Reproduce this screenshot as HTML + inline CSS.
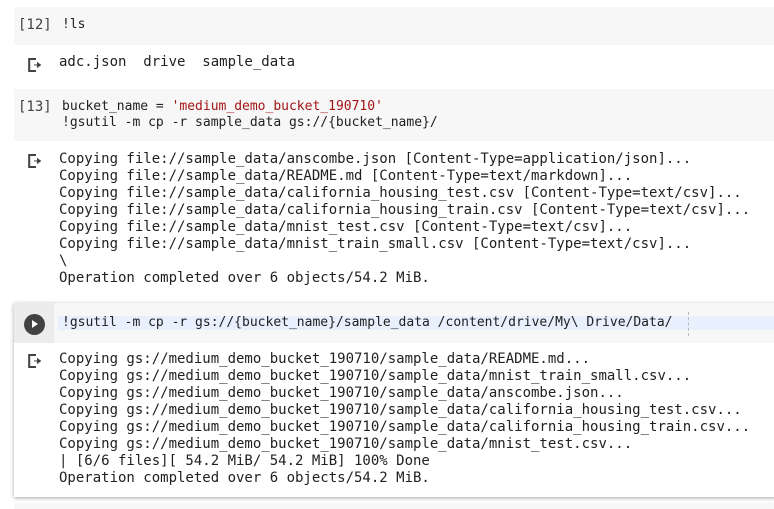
<!DOCTYPE html>
<html><head><style>
*{margin:0;padding:0;box-sizing:border-box}
body{width:774px;height:509px;background:#fff;overflow:hidden;position:relative;font-family:"DejaVu Sans Mono","Liberation Mono",monospace;color:#212121}
.abs{position:absolute}
.gray{background:#f7f7f7}
.code{font-size:13px;line-height:16px;white-space:pre;color:#212121}
.out{font-size:14px;line-height:17px;white-space:pre;color:#212121}
.cnt{font-size:14px;color:#424242;white-space:pre}
.str{color:#a31515}
.ico{position:absolute;width:16px;height:16px}
</style></head><body>
<div class="abs gray" style="left:14px;top:7px;width:760px;height:38px"></div>
<div class="abs cnt" style="left:18px;top:17px">[12]</div>
<div class="abs code" style="left:62px;top:17px">!ls</div>
<svg class="ico" style="left:27px;top:57px" viewBox="0 0 16 16"><path d="M9 2H2.2V14H9" fill="none" stroke="#424242" stroke-width="2"/><path d="M7 8H12M10.5 5.8L13.5 8L10.5 10.2Z" fill="#424242" stroke="#424242" stroke-width="1"/></svg>
<div class="abs out" style="left:59px;top:54px">adc.json  drive  sample_data</div>

<div class="abs gray" style="left:14px;top:89px;width:760px;height:52px"></div>
<div class="abs cnt" style="left:18px;top:99px">[13]</div>
<div class="abs code" style="left:62px;top:99px">bucket_name = <span class="str">'medium_demo_bucket_190710'</span>
!gsutil -m cp -r sample_data gs://{bucket_name}/</div>
<svg class="ico" style="left:27px;top:153px" viewBox="0 0 16 16"><path d="M9 2H2.2V14H9" fill="none" stroke="#424242" stroke-width="2"/><path d="M7 8H12M10.5 5.8L13.5 8L10.5 10.2Z" fill="#424242" stroke="#424242" stroke-width="1"/></svg>
<div class="abs out" style="left:59px;top:151px">Copying file://sample_data/anscombe.json [Content-Type=application/json]...
Copying file://sample_data/README.md [Content-Type=text/markdown]...
Copying file://sample_data/california_housing_test.csv [Content-Type=text/csv]...
Copying file://sample_data/california_housing_train.csv [Content-Type=text/csv]...
Copying file://sample_data/mnist_test.csv [Content-Type=text/csv]...
Copying file://sample_data/mnist_train_small.csv [Content-Type=text/csv]...
\
Operation completed over 6 objects/54.2 MiB.</div>

<div class="abs" style="left:14px;top:303px;width:762px;height:194px;background:#fff;box-shadow:0 1px 4px rgba(0,0,0,.35)"></div>
<div class="abs gray" style="left:14px;top:303px;width:760px;height:40px"></div>
<div class="abs" style="left:14px;top:303px;width:40px;height:40px;background:#ececec"></div>
<div class="abs" style="left:24px;top:314px;width:21px;height:21px;border-radius:50%;background:#424242"></div>
<div class="abs" style="left:32px;top:320px;width:0;height:0;border-left:6px solid #fff;border-top:4.5px solid transparent;border-bottom:4.5px solid transparent"></div>
<div class="abs" style="left:58px;top:316px;width:716px;height:14px;background:#e8f0fe"></div>
<div class="abs" style="left:688px;top:312px;width:0;height:24px;border-left:1px dashed #bbb"></div>
<div class="abs code" style="left:62px;top:315px">!gsutil -m cp -r gs://{bucket_name}/sample_data /content/drive/My\ Drive/Data/</div>
<svg class="ico" style="left:27px;top:353px" viewBox="0 0 16 16"><path d="M9 2H2.2V14H9" fill="none" stroke="#424242" stroke-width="2"/><path d="M7 8H12M10.5 5.8L13.5 8L10.5 10.2Z" fill="#424242" stroke="#424242" stroke-width="1"/></svg>
<div class="abs out" style="left:59px;top:351px">Copying gs://medium_demo_bucket_190710/sample_data/README.md...
Copying gs://medium_demo_bucket_190710/sample_data/mnist_train_small.csv...
Copying gs://medium_demo_bucket_190710/sample_data/anscombe.json...
Copying gs://medium_demo_bucket_190710/sample_data/california_housing_test.csv...
Copying gs://medium_demo_bucket_190710/sample_data/california_housing_train.csv...
Copying gs://medium_demo_bucket_190710/sample_data/mnist_test.csv...
| [6/6 files][ 54.2 MiB/ 54.2 MiB] 100% Done
Operation completed over 6 objects/54.2 MiB.</div>
<div class="abs gray" style="left:14px;top:503px;width:760px;height:6px"></div>
</body></html>
